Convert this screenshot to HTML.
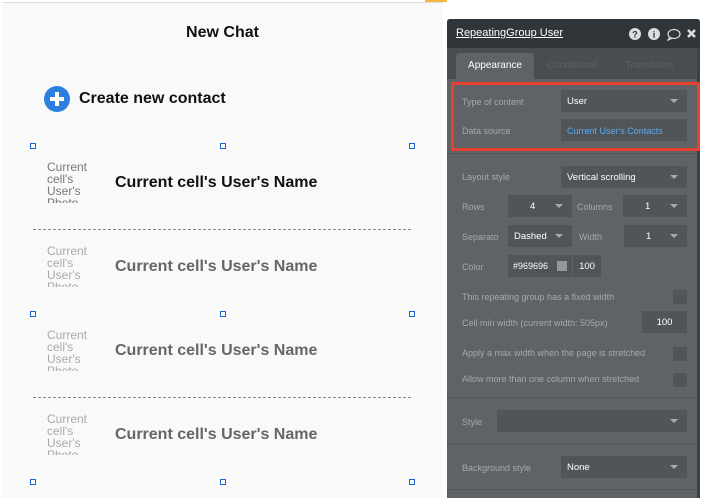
<!DOCTYPE html>
<html><head><style>
*{margin:0;padding:0;box-sizing:border-box}
body{width:707px;height:498px;overflow:hidden;background:#fff;font-family:"Liberation Sans",sans-serif;position:relative}
.a{position:absolute}
.canvas{left:2px;top:2px;width:441px;height:496px;background:#f9f9f9;border-top:1px solid #ddd}
.h{width:6px;height:6px;border:1px solid #1a64e0;background:#fff}
.photo{font-size:12px;line-height:12px;color:#888;width:45px;height:42px;overflow:hidden}
.name{font-size:16px;font-weight:bold}
.dash{border-top:1px dashed #888;left:33px;width:378px}
.p{font-size:9px;color:#a5a9ac}
.sel{background:#50555a;color:#fff;font-size:9.5px;padding-left:6px;line-height:24px;height:22px}
.sel:after{content:"";position:absolute;right:9px;top:9px;border:4px solid transparent;border-top:4px solid #aaa;border-bottom:none}
.sel.na:after{display:none}
.cb{width:14px;height:14px;background:#50555a}
.ln{left:447px;width:250px;height:1px;background:#55595d}
</style></head><body>
<div class="a" style="left:425px;top:0;width:22px;height:2px;background:#f5b642"></div>
<div class="a canvas"></div>
<div class="a" style="left:0;top:25px;width:445px;text-align:center;font-size:16px;font-weight:bold;color:#111;line-height:16px">New Chat</div>
<svg class="a" style="left:44px;top:86px" width="26" height="26"><circle cx="13" cy="13" r="13" fill="#2b7fde"/><rect x="6" y="11" width="14" height="4" fill="#fff"/><rect x="11" y="6" width="4" height="14" fill="#fff"/></svg>
<div class="a" style="left:79px;top:90px;font-size:16px;font-weight:bold;color:#111">Create new contact</div>
<div class="a h" style="left:30px;top:143px"></div><div class="a h" style="left:220px;top:143px"></div><div class="a h" style="left:409px;top:143px"></div>
<div class="a h" style="left:30px;top:311px"></div><div class="a h" style="left:220px;top:311px"></div><div class="a h" style="left:409px;top:311px"></div>
<div class="a h" style="left:30px;top:479px"></div><div class="a h" style="left:220px;top:479px"></div><div class="a h" style="left:409px;top:479px"></div>
<div class="a photo" style="left:47px;top:161px;color:#777">Current cell's User's Photo</div>
<div class="a name" style="left:115px;top:174px;color:#111">Current cell's User's Name</div>
<div class="a dash" style="top:229px"></div>
<div class="a photo" style="left:47px;top:245px;color:#aaa">Current cell's User's Photo</div>
<div class="a name" style="left:115px;top:258px;color:#666">Current cell's User's Name</div>
<div class="a photo" style="left:47px;top:329px;color:#aaa">Current cell's User's Photo</div>
<div class="a name" style="left:115px;top:342px;color:#666">Current cell's User's Name</div>
<div class="a dash" style="top:397px"></div>
<div class="a photo" style="left:47px;top:413px;color:#aaa">Current cell's User's Photo</div>
<div class="a name" style="left:115px;top:426px;color:#666">Current cell's User's Name</div>

<div class="a" style="left:447px;top:19px;width:253px;height:479px;background:#5f6367;border-radius:3px 3px 0 0"></div>
<div class="a" style="left:697px;top:48px;width:3px;height:450px;background:#3c4044"></div>
<div class="a" style="left:447px;top:19px;width:253px;height:29px;background:#30353a;border-radius:3px 3px 0 0"></div>
<div class="a" style="left:456px;top:27px;font-size:11px;color:#fff;text-decoration:underline">RepeatingGroup User</div>
<svg class="a" style="left:628px;top:27px" width="72" height="14">
<circle cx="7" cy="7" r="6" fill="#ddd"/><text x="7" y="10.5" font-size="9" font-weight="bold" text-anchor="middle" fill="#30353a" font-family="Liberation Sans">?</text>
<circle cx="26" cy="7" r="6" fill="#ddd"/><text x="26" y="10.5" font-size="9" font-weight="bold" text-anchor="middle" fill="#30353a" font-family="Liberation Serif">i</text>
<ellipse cx="46" cy="7" rx="6" ry="4.5" fill="none" stroke="#ddd" stroke-width="1.2"/><path d="M42 10 L40 13 L45 11" fill="none" stroke="#ddd" stroke-width="1.2"/>
<path d="M60 3 L67 10 M67 3 L60 10" stroke="#ddd" stroke-width="2.6"/>
</svg>
<div class="a" style="left:447px;top:48px;width:250px;height:31px;background:#484d52"></div>
<div class="a" style="left:456px;top:53px;width:78px;height:26px;background:#5f6367;border-radius:3px 3px 0 0;color:#fff;font-size:10px;text-align:center;line-height:26px">Appearance</div>
<div class="a" style="left:547px;top:60px;font-size:10px;color:#5c6166">Conditional</div>
<div class="a" style="left:625px;top:60px;font-size:10px;color:#5c6166">Transitions</div>
<div class="a" style="left:451px;top:82px;width:249px;height:69px;border:3px solid #e8402f"></div>
<div class="a p" style="left:462px;top:97px">Type of content</div>
<div class="a sel" style="left:561px;top:90px;width:126px">User</div>
<div class="a p" style="left:462px;top:126px">Data source</div>
<div class="a sel na" style="left:561px;top:119px;width:126px;color:#5aa9ee;font-size:9px">Current User's Contacts</div>
<div class="a ln" style="top:153px"></div>
<div class="a p" style="left:462px;top:172px">Layout style</div>
<div class="a sel" style="left:561px;top:166px;width:126px">Vertical scrolling</div>
<div class="a p" style="left:462px;top:202px">Rows</div>
<div class="a sel" style="left:508px;top:195px;width:64px;padding-left:22px">4</div>
<div class="a p" style="left:577px;top:202px">Columns</div>
<div class="a sel" style="left:623px;top:195px;width:64px;padding-left:22px">1</div>
<div class="a p" style="left:462px;top:232px">Separato</div>
<div class="a sel" style="left:508px;top:225px;width:64px">Dashed</div>
<div class="a p" style="left:579px;top:232px">Width</div>
<div class="a sel" style="left:624px;top:225px;width:63px;padding-left:22px">1</div>
<div class="a p" style="left:462px;top:262px">Color</div>
<div class="a" style="left:508px;top:255px;width:64px;height:22px;background:#50555a;color:#fff;font-size:9px;line-height:22px;padding-left:5px">#969696</div>
<div class="a" style="left:557px;top:261px;width:10px;height:10px;background:#969696"></div>
<div class="a" style="left:573px;top:255px;width:28px;height:22px;background:#50555a;color:#fff;font-size:9.5px;line-height:24px;text-align:center">100</div>
<div class="a p" style="left:462px;top:292px">This repeating group has a fixed width</div>
<div class="a cb" style="left:673px;top:290px"></div>
<div class="a p" style="left:462px;top:318px">Cell min width (current width: 505px)</div>
<div class="a" style="left:642px;top:311px;width:45px;height:22px;background:#50555a;color:#fff;font-size:9.5px;line-height:24px;text-align:center">100</div>
<div class="a p" style="left:462px;top:348px">Apply a max width when the page is stretched</div>
<div class="a cb" style="left:673px;top:347px"></div>
<div class="a p" style="left:462px;top:374px">Allow more than one column when stretched</div>
<div class="a cb" style="left:673px;top:373px"></div>
<div class="a ln" style="top:397px"></div>
<div class="a p" style="left:462px;top:417px">Style</div>
<div class="a sel" style="left:497px;top:410px;width:190px"></div>
<div class="a ln" style="top:443px"></div>
<div class="a p" style="left:462px;top:463px">Background style</div>
<div class="a sel" style="left:561px;top:456px;width:126px">None</div>
<div class="a ln" style="top:489px"></div>
</body></html>
